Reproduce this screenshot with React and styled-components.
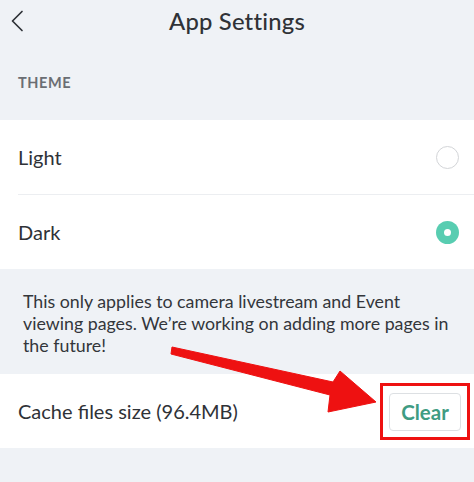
import React from "react";
import styled, { createGlobalStyle } from "styled-components";

const Global = createGlobalStyle`
  html, body { margin: 0; padding: 0; background: #eff2f6; }
  body { font-family: Lato, "Noto Sans", sans-serif; color: #2f3237; }
  * { box-sizing: border-box; }
`;

const Page = styled.div`
  position: relative;
  width: 474px;
  min-height: 482px;
  background: #eff2f6;
  display: flex;
  flex-direction: column;
`;

const Header = styled.header`
  position: relative;
  height: 44px;
  display: flex;
  align-items: center;
  justify-content: center;
`;

const BackButton = styled.button`
  position: absolute;
  left: 5px;
  top: 8px;
  width: 24px;
  height: 26px;
  border: 0;
  padding: 0;
  background: transparent;
  display: flex;
  align-items: center;
  justify-content: center;
`;

const Title = styled.h1`
  margin: 0 0 2px;
  font-size: 23.8px;
  font-weight: 500;
  color: #2f3237;
  letter-spacing: 0.2px;
`;

const SectionLabel = styled.div`
  height: 76px;
  padding: 30px 18px 0;
  font-size: 14.5px;
  font-weight: 700;
  letter-spacing: 0.6px;
  color: #6b6e73;
`;

const List = styled.div`
  background: #fff;
`;

const Row = styled.div`
  height: 74px;
  display: flex;
  align-items: center;
  justify-content: space-between;
  padding: 0 ${(p) => p.$pr ?? 15}px 0 18px;
  font-size: 20px;
  color: #2f3237;
`;

const Divider = styled.div`
  height: 1px;
  margin-left: 18px;
  background: #eceef1;
`;

const Radio = styled.span`
  width: 23px;
  height: 23px;
  border-radius: 50%;
  display: flex;
  align-items: center;
  justify-content: center;
  border: ${(p) => (p.$on ? "0" : "1.5px solid #d3d5d8")};
  background: ${(p) => (p.$on ? "#58cdb1" : "#fff")};
  &::after {
    content: "";
    display: ${(p) => (p.$on ? "block" : "none")};
    width: 7px;
    height: 7px;
    border-radius: 50%;
    background: #fff;
  }
`;

const Note = styled.p`
  margin: 0;
  padding: 21px 20px 18px 23px;
  font-size: 17.8px;
  line-height: 22px;
  color: #33363b;
`;

const Highlight = styled.div`
  border: 3px solid #ee1111;
  padding: 7px 6px 6px;
`;

const ClearButton = styled.button`
  width: 72px;
  height: 38px;
  border: 1.5px solid #dde0e3;
  border-radius: 4px;
  background: #fff;
  font-family: inherit;
  font-size: 20.5px;
  font-weight: 700;
  color: #3f9c83;
  padding: 0;
`;

const Arrow = styled.svg`
  position: absolute;
  left: 0;
  top: 0;
  pointer-events: none;
`;

export default function App() {
  return (
    <Page>
      <Global />
      <Header>
        <BackButton aria-label="Back">
          <svg width="14" height="22" viewBox="0 0 14 22">
            <path d="M12 1.5 L2.5 11 L12 20.5" fill="none" stroke="#2f3237" strokeWidth="1.7" strokeLinecap="round" strokeLinejoin="round" />
          </svg>
        </BackButton>
        <Title>App Settings</Title>
      </Header>
      <SectionLabel>THEME</SectionLabel>
      <List>
        <Row>
          <span>Light</span>
          <Radio />
        </Row>
        <Divider />
        <Row>
          <span>Dark</span>
          <Radio $on />
        </Row>
      </List>
      <Note>
        This only applies to camera livestream and Event viewing pages. We’re working on adding more pages in the future!
      </Note>
      <List>
        <Row $pr={4}>
          <span>Cache files size (96.4MB)</span>
          <Highlight>
            <ClearButton>Clear</ClearButton>
          </Highlight>
        </Row>
      </List>
      <Arrow width="474" height="482" viewBox="0 0 474 482">
        <polygon
          points="172,347 333,382 340,371 376,402 328,412 330,395 171,354"
          fill="#ee1111"
          stroke="#ee1111"
          strokeWidth="1"
          strokeLinejoin="round"
        />
      </Arrow>
    </Page>
  );
}
